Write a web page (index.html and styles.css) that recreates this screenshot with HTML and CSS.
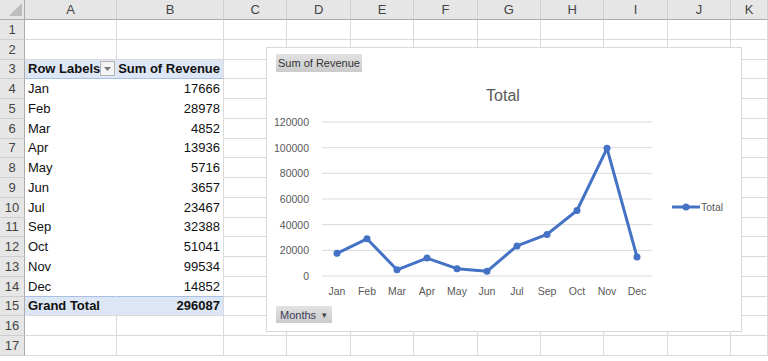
FILE: index.html
```html
<!DOCTYPE html>
<html lang="en">
<head>
    <meta charset="UTF-8">
    <meta name="viewport" content="width=device-width, initial-scale=1.0">
    <title>Revenue pivot</title>
    <link rel="stylesheet" href="styles.css">
</head>
<body>
    <div class="workbook">
        <div class="sheet" id="sheet">
            <div class="corner">
                <svg width="13" height="13" viewBox="0 0 13 13"><polygon points="13,0 13,13 0,13" fill="#bdbdbd"/></svg>
            </div>
        </div>

        <div class="chart">
            <div class="field-btn">Sum of Revenue</div>
            <svg class="plot" width="474" height="234" viewBox="0 0 474 234">
                <text class="chart-title" x="236" y="29" text-anchor="middle">Total</text>
                <g id="grid"></g>
                <g id="xlabels"></g>
                <polyline id="series" fill="none" stroke="#4472c4" stroke-width="3" stroke-linejoin="round"/>
                <g id="markers"></g>
                <line x1="405" y1="135" x2="433" y2="135" stroke="#4472c4" stroke-width="3"/>
                <circle cx="419" cy="135" r="3.5" fill="#4472c4"/>
                <text class="axis" x="434" y="139">Total</text>
            </svg>
            <div class="field-btn months">Months <span class="arrow">&#9662;</span></div>
        </div>
    </div>

    <script>
        const cols = ["A", "B", "C", "D", "E", "F", "G", "H", "I", "J", "K"];
        const months = [
            ["Jan", 17666], ["Feb", 28978], ["Mar", 4852], ["Apr", 13936],
            ["May", 5716], ["Jun", 3657], ["Jul", 23467], ["Sep", 32388],
            ["Oct", 51041], ["Nov", 99534], ["Dec", 14852]
        ];
        const sheet = document.getElementById("sheet");

        function cell(cls, text) {
            const d = document.createElement("div");
            d.className = cls;
            if (text !== undefined) d.textContent = text;
            sheet.appendChild(d);
            return d;
        }

        cols.forEach(c => cell("col-head", c));

        for (let r = 1; r <= 17; r++) {
            cell("row-head", r);
            cols.forEach((c, i) => {
                let cls = "cell";
                let text;
                if (r >= 3 && r <= 15 && i < 2) {
                    cls += " pv" + (i === 0 ? " pv-a" : " pv-b");
                    if (r === 3) cls += " pv-head";
                    if (r === 14) cls += " pv-last";
                    if (r === 15) cls += " pv-total";
                    if (r === 3) {
                        text = i === 0 ? "Row Labels" : "Sum of Revenue";
                    } else if (r === 15) {
                        text = i === 0 ? "Grand Total" : "296087";
                    } else {
                        const m = months[r - 4];
                        text = i === 0 ? m[0] : String(m[1]);
                    }
                }
                const d = cell(cls, text);
                if (r === 3 && i === 0) {
                    const btn = document.createElement("span");
                    btn.className = "filter-btn";
                    btn.innerHTML = '<svg width="7" height="4" viewBox="0 0 7 4"><polygon points="0,0 7,0 3.5,4" fill="#777"/></svg>';
                    d.appendChild(btn);
                }
            });
        }

        // chart
        const svgNs = "http://www.w3.org/2000/svg";
        const grid = document.getElementById("grid");
        const xlabels = document.getElementById("xlabels");
        const markers = document.getElementById("markers");
        const zeroY = 204, topY = 50, maxV = 120000;

        function el(name, attrs, parent, text) {
            const e = document.createElementNS(svgNs, name);
            for (const k in attrs) e.setAttribute(k, attrs[k]);
            if (text !== undefined) e.textContent = text;
            parent.appendChild(e);
            return e;
        }

        for (let v = 0; v <= maxV; v += 20000) {
            const y = zeroY - v / maxV * (zeroY - topY);
            el("line", { x1: 55, x2: 385, y1: y, y2: y, stroke: "#d9d9d9", "stroke-width": 1 }, grid);
            el("text", { x: 42, y: y + 4, "text-anchor": "end", class: "axis" }, grid, String(v));
        }

        const pts = months.map((m, i) => {
            const x = 70 + i * 30;
            const y = zeroY - m[1] / maxV * (zeroY - topY);
            el("text", { x: x, y: 223, "text-anchor": "middle", class: "axis" }, xlabels, m[0]);
            el("circle", { cx: x, cy: y, r: 3.5, fill: "#4472c4" }, markers);
            return x + "," + y.toFixed(1);
        });
        document.getElementById("series").setAttribute("points", pts.join(" "));
    </script>
</body>
</html>
```

FILE: styles.css
```css
body {
    margin: 0;
    font-family: "Liberation Sans", Arial, sans-serif;
    background-color: #fff;
    color: #111;
}
.workbook {
    position: relative;
    width: 768px;
    height: 361px;
    overflow: hidden;
}
.sheet {
    display: grid;
    grid-template-columns: 25px 92px 107px repeat(8, 63.4px) 1fr;
    grid-template-rows: 20px repeat(17, 19.75px);
    font-size: 13px;
}
.sheet > div {
    box-sizing: border-box;
    border-right: 1px solid #dadada;
    border-bottom: 1px solid #dadada;
    display: flex;
    align-items: center;
    padding: 0 3px;
    white-space: nowrap;
    overflow: hidden;
}
.sheet > .corner {
    background-color: #e6e6e6;
    border-right-color: #ababab;
    border-bottom-color: #ababab;
    justify-content: flex-end;
    align-items: flex-end;
    padding: 0 2px 3px 0;
}
.sheet > .col-head {
    background-color: #e6e6e6;
    color: #444;
    justify-content: center;
    border-bottom-color: #ababab;
    border-right-color: #cfcfcf;
}
.sheet > .row-head {
    background-color: #e6e6e6;
    color: #444;
    justify-content: center;
    padding: 0;
    border-right-color: #ababab;
    border-bottom-color: #cfcfcf;
}

/* pivot table */
.sheet > .pv {
    border-bottom-color: transparent;
}
.sheet > .pv-a {
    border-right-color: transparent;
    justify-content: space-between;
    padding-right: 1px;
}
.sheet > .pv-b {
    justify-content: flex-end;
    padding-right: 3px;
}
.sheet > .pv-head,
.sheet > .pv-total {
    background-color: #dde6f4;
    font-weight: bold;
}
.sheet > .pv-head {
    border-bottom-color: #a9bfe3;
}
.sheet > .pv-last {
    border-bottom-color: #a9bfe3;
}
.sheet > .pv-total {
    border-bottom-color: #dadada;
}
.filter-btn {
    width: 15px;
    height: 15px;
    box-sizing: border-box;
    border: 1px solid #b4b4b4;
    background-color: #f4f4f4;
    display: flex;
    align-items: center;
    justify-content: center;
}

/* chart */
.chart {
    position: absolute;
    left: 266px;
    top: 47px;
    width: 476px;
    height: 285px;
    box-sizing: border-box;
    border: 1px solid #d9d9d9;
    background-color: #fff;
    display: flex;
    flex-direction: column;
    align-items: flex-start;
}
.field-btn {
    margin: 6px 0 0 9px;
    height: 18px;
    padding: 0 2px;
    background: linear-gradient(#e2e2e2, #cbcbcb);
    font-size: 11px;
    color: #333;
    display: flex;
    align-items: center;
}
.months {
    margin-top: 0;
    height: 17px;
    color: #3a3a58;
    padding: 0 5px 0 4px;
}
.arrow {
    font-size: 9px;
    margin-left: 6px;
    color: #444;
}
.plot {
    display: block;
}
.chart-title {
    font-size: 16px;
    fill: #595959;
}
.axis {
    font-size: 10.5px;
    fill: #595959;
}
```
